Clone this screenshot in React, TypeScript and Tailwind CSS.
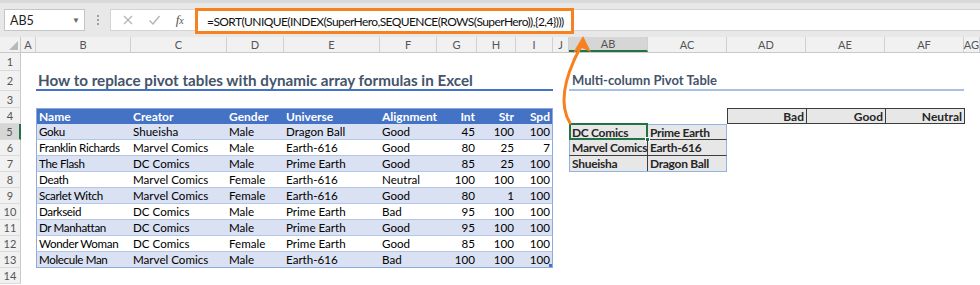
import React from "react";

type Hero = [string, string, string, string, string, number, number, number];
const heroes: Hero[] = [
  ["Goku", "Shueisha", "Male", "Dragon Ball", "Good", 45, 100, 100],
  ["Franklin Richards", "Marvel Comics", "Male", "Earth-616", "Good", 80, 25, 7],
  ["The Flash", "DC Comics", "Male", "Prime Earth", "Good", 85, 25, 100],
  ["Death", "Marvel Comics", "Female", "Earth-616", "Neutral", 100, 100, 100],
  ["Scarlet Witch", "Marvel Comics", "Female", "Earth-616", "Good", 80, 1, 100],
  ["Darkseid", "DC Comics", "Male", "Prime Earth", "Bad", 95, 100, 100],
  ["Dr Manhattan", "DC Comics", "Male", "Prime Earth", "Good", 95, 100, 100],
  ["Wonder Woman", "DC Comics", "Female", "Prime Earth", "Good", 85, 100, 100],
  ["Molecule Man", "Marvel Comics", "Male", "Earth-616", "Bad", 100, 100, 100],
];

const pivot: [string, string][] = [
  ["DC Comics", "Prime Earth"],
  ["Marvel Comics", "Earth-616"],
  ["Shueisha", "Dragon Ball"],
];

const colHeads: { label: string; w: string; active?: boolean }[] = [
  { label: "A", w: "w-[15px]" },
  { label: "B", w: "w-[95px]" },
  { label: "C", w: "w-[96px]" },
  { label: "D", w: "w-[57px]" },
  { label: "E", w: "w-[96px]" },
  { label: "F", w: "w-[57px]" },
  { label: "G", w: "w-[40px]" },
  { label: "H", w: "w-[39px]" },
  { label: "I", w: "w-[37px]" },
  { label: "J", w: "w-[16px]" },
  { label: "AB", w: "w-[79px]", active: true },
  { label: "AC", w: "w-[79px]" },
  { label: "AD", w: "w-[79px]" },
  { label: "AE", w: "w-[79px]" },
  { label: "AF", w: "w-[79px]" },
  { label: "AG", w: "w-[16px]" },
];

function RowHead({ n, active }: { n: number; active?: boolean }) {
  return (
    <div
      className={
        "w-[21px] shrink-0 flex items-center justify-center text-[11px] text-[#555] border-b border-[#dadada] " +
        (active
          ? "bg-[#d6d6d6] border-r-2 border-r-[#217346]"
          : "bg-[#f1f1f1] border-r border-r-[#c9c9c9]")
      }
    >
      {n}
    </div>
  );
}

function TableRow({ h, idx }: { h: Hero; idx: number }) {
  const band = idx % 2 === 0 ? "bg-[#d9e1f2]" : "bg-white";
  const last = idx === heroes.length - 1;
  return (
    <div
      className={
        "w-[517px] shrink-0 flex whitespace-nowrap text-[11.6px] border-x border-[#8ea9db] " +
        band +
        (last ? " border-b border-b-[#8ea9db]" : " border-b border-b-[#b4c6e7]")
      }
    >
      <div className="w-[94px] pl-[2px] tracking-[-0.35px]">{h[0]}</div>
      <div className="w-[96px] pl-[2px]">{h[1]}</div>
      <div className="w-[57px] pl-[2px]">{h[2]}</div>
      <div className="w-[96px] pl-[2px]">{h[3]}</div>
      <div className="w-[57px] pl-[2px]">{h[4]}</div>
      <div className="w-[40px] pr-[2px] text-right">{h[5]}</div>
      <div className="w-[39px] pr-[2px] text-right">{h[6]}</div>
      <div className="flex-1 pr-[2px] text-right relative">
        {h[7]}
        {last && (
          <span className="absolute right-0 bottom-0 w-[3px] h-[3px] bg-[#4472c4]" />
        )}
      </div>
    </div>
  );
}

function PivotRow({ i }: { i: number }) {
  const [a, b] = pivot[i];
  return (
    <div
      className={
        "w-[158px] shrink-0 flex whitespace-nowrap bg-[#e7e7e7] font-bold tracking-[-0.3px] text-[#262626] border-x border-[#8eb4e3] " +
        (i === 0 ? "border-t border-t-[#8eb4e3] " : "") +
        (i === 2 ? "border-b border-b-[#8eb4e3]" : "border-b border-b-[#3c3c3c]")
      }
    >
      <div className="w-[78px] pl-[2px] border-r border-[#3c3c3c] relative">
        {a}
        {i === 0 && (
          <>
            <span className="absolute -left-[1px] -top-[2px] -right-[1px] -bottom-[1px] border-2 border-[#217346]" />
            <span className="absolute -right-[3px] -bottom-[3px] w-[5px] h-[5px] bg-[#217346] border border-white" />
          </>
        )}
      </div>
      <div className="flex-1 pl-[2px]">{b}</div>
    </div>
  );
}

export default function App() {
  return (
    <div className="relative w-[980px] h-[285px] overflow-hidden bg-white font-['Lato',sans-serif] text-[12px] leading-[15px] text-black">
      {/* Formula bar */}
      <div className="h-[37px] bg-[#e8e8e8] border-t-[3px] border-[#d9d9d9] flex items-center">
        <div className="ml-[4px] w-[81px] h-[22px] bg-white border border-[#c6c6c6] flex items-center pl-[5px] pr-[4px] text-[12.5px] text-[#222]">
          <span className="flex-1">AB5</span>
          <span className="text-[8px] text-[#666]">▼</span>
        </div>
        <div className="w-[25px] flex flex-col items-center gap-[2px]">
          <span className="w-[2px] h-[2px] bg-[#a0a0a0]" />
          <span className="w-[2px] h-[2px] bg-[#a0a0a0]" />
          <span className="w-[2px] h-[2px] bg-[#a0a0a0]" />
        </div>
        <div className="w-[86px] h-[22px] bg-white border border-[#d4d4d4] flex items-center justify-around px-[4px]">
          <svg width="12" height="12" viewBox="0 0 12 12">
            <path d="M2 2 L10 10 M10 2 L2 10" stroke="#b5b5b5" strokeWidth="1.3" />
          </svg>
          <svg width="13" height="12" viewBox="0 0 13 12">
            <path d="M1.5 6.5 L5 10 L11.5 2" stroke="#b5b5b5" strokeWidth="1.4" fill="none" />
          </svg>
          <span className="font-['Liberation_Serif',serif] italic text-[13px] text-[#555]">
            f<span className="text-[10px]">x</span>
          </span>
        </div>
        <div className="flex-1 h-[22px] bg-white border-y border-[#d4d4d4] relative">
          <div className="absolute -left-[1px] -top-[2px] w-[379px] h-[26px] border-[3px] border-[#f7811e] bg-white flex items-center pl-[9px] whitespace-nowrap text-[12px] tracking-[-0.58px] text-[#111]">
            =SORT(UNIQUE(INDEX(SuperHero,SEQUENCE(ROWS(SuperHero)),{"{2,4}"})))
          </div>
        </div>
      </div>

      {/* Column headers */}
      <div className="flex h-[16px] bg-[#f1f1f1] border-b border-[#c9c9c9]">
        <div className="w-[21px] shrink-0 border-r border-[#c9c9c9] relative">
          <svg className="absolute right-[2px] bottom-[2px]" width="9" height="9" viewBox="0 0 9 9">
            <polygon points="9,0 9,9 0,9" fill="#b9b9b9" />
          </svg>
        </div>
        {colHeads.map((c) => (
          <div
            key={c.label}
            className={
              c.w +
              " shrink-0 flex items-center justify-center text-[11px] text-[#555] border-r border-[#d0d0d0] " +
              (c.active ? "bg-[#d6d6d6] border-b-2 border-b-[#217346]" : "")
            }
          >
            {c.label}
          </div>
        ))}
      </div>

      {/* Row 1 */}
      <div className="flex h-[18px]">
        <RowHead n={1} />
      </div>

      {/* Row 2: titles */}
      <div className="flex h-[20px]">
        <RowHead n={2} />
        <div className="w-[15px] shrink-0" />
        <div className="w-[517px] shrink-0 border-b-2 border-[#4472c4] flex items-end pl-[2px] whitespace-nowrap font-bold text-[15.2px] leading-[18px] text-[#44546a]">
          How to replace pivot tables with dynamic array formulas in Excel
        </div>
        <div className="w-[16px] shrink-0" />
        <div className="w-[395px] shrink-0 border-b-2 border-[#a6c0e8] flex items-end pl-[3px] whitespace-nowrap font-bold text-[13px] leading-[17px] text-[#44546a]">
          Multi-column Pivot Table
        </div>
      </div>

      {/* Row 3 */}
      <div className="flex h-[17px]">
        <RowHead n={3} />
      </div>

      {/* Row 4: table header + pivot columns */}
      <div className="flex h-[16px]">
        <RowHead n={4} />
        <div className="w-[15px] shrink-0" />
        <div className="w-[517px] shrink-0 flex whitespace-nowrap bg-[#4472c4] text-white font-bold border-x border-t border-[#8ea9db]">
          <div className="w-[94px] pl-[2px]">Name</div>
          <div className="w-[96px] pl-[2px]">Creator</div>
          <div className="w-[57px] pl-[2px]">Gender</div>
          <div className="w-[96px] pl-[2px]">Universe</div>
          <div className="w-[57px] pl-[2px]">Alignment</div>
          <div className="w-[40px] pr-[2px] text-right">Int</div>
          <div className="w-[39px] pr-[2px] text-right">Str</div>
          <div className="flex-1 pr-[2px] text-right">Spd</div>
        </div>
        <div className="w-[16px] shrink-0" />
        <div className="w-[158px] shrink-0" />
        <div className="w-[238px] shrink-0 flex bg-[#e7e7e7] font-bold text-[#262626] border border-[#3c3c3c]">
          <div className="w-[79px] pr-[2px] text-right border-r border-[#3c3c3c]">Bad</div>
          <div className="w-[79px] pr-[2px] text-right border-r border-[#3c3c3c]">Good</div>
          <div className="flex-1 pr-[2px] text-right">Neutral</div>
        </div>
      </div>

      {/* Rows 5-13 */}
      {heroes.map((h, i) => (
        <div key={h[0]} className="flex h-[16px]">
          <RowHead n={5 + i} active={i === 0} />
          <div className="w-[15px] shrink-0" />
          <TableRow h={h} idx={i} />
          <div className="w-[16px] shrink-0" />
          {i < 3 && <PivotRow i={i} />}
        </div>
      ))}

      {/* Row 14 */}
      <div className="flex h-[16px]">
        <RowHead n={14} />
      </div>

      {/* Orange arrow overlay */}
      <svg className="absolute left-0 top-0 pointer-events-none" width="980" height="285" viewBox="0 0 980 285">
        <path d="M570 123 C562 110 559 88 580 48" stroke="#f7811e" strokeWidth="3" fill="none" strokeLinecap="round" />
        <polygon points="583,36 573,53 582,48 591,52" fill="#f7811e" />
      </svg>
    </div>
  );
}
